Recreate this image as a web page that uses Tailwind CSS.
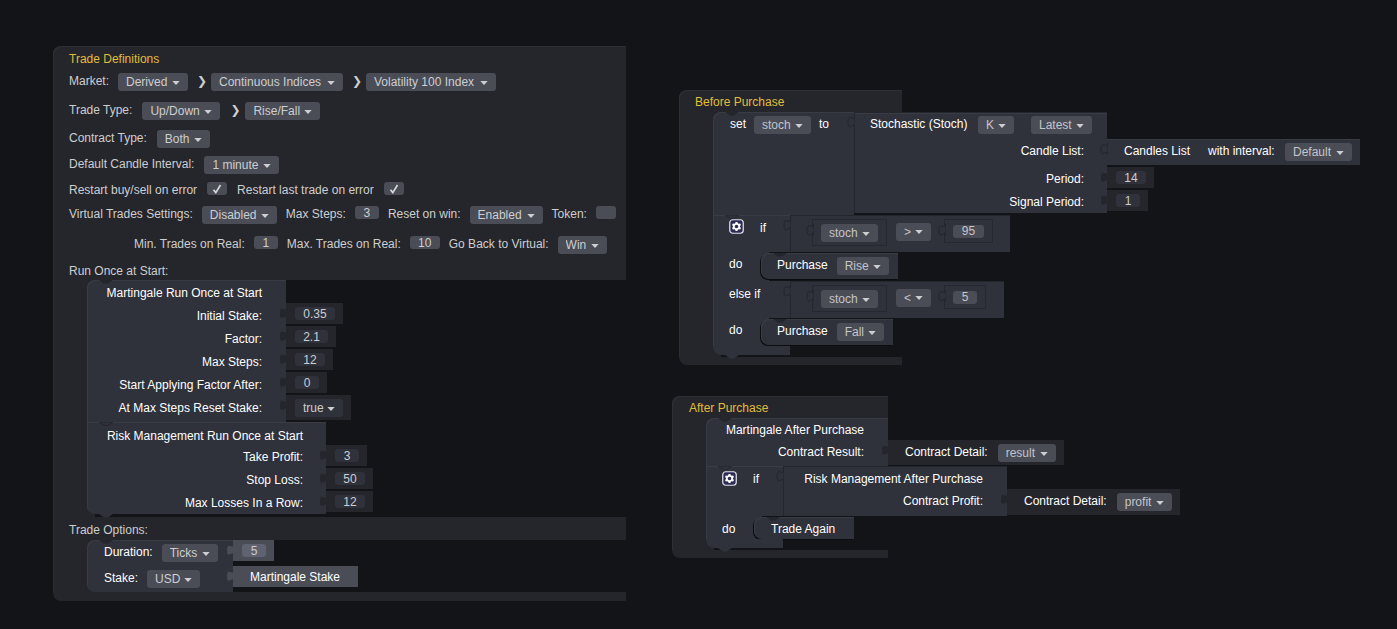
<!doctype html>
<html lang="en">
  <head>
    <meta charset="UTF-8" />
    <meta name="viewport" content="width=device-width, initial-scale=1.0" />
    <title>Bot Builder</title>
    <script src="https://cdn.jsdelivr.net/npm/@tailwindcss/browser@4"></script>
  </head>
  <body class="min-h-screen bg-[#131418] font-['Liberation_Sans',Arial,sans-serif] text-xs text-white">
    <!-- shared block shapes -->
    <svg class="hidden">
      <symbol id="caret" viewBox="0 0 8 4"><path d="M0.3 0h7.4L4 4z" /></symbol>
      <symbol id="tab" viewBox="0 0 8 14"><path d="M8 0C8 7 1 -4 1 6.500S8 4 8 12z" /></symbol>
      <symbol id="notch" viewBox="0 0 14 4"><path d="M0 0h14l-5 3.500H5z" /></symbol>
      <symbol id="check" viewBox="0 0 10 10"><path d="M1.500 5.800 3.800 8.600 8.500 1" fill="none" stroke="#d6d7d9" stroke-width="1.700" /></symbol>
      <symbol id="gear" viewBox="0 0 15 15">
        <rect x="0.750" y="0.750" width="13.500" height="13.500" rx="3" fill="#2c2d55" stroke="#e4e4ea" stroke-width="1.200" />
        <path fill="#fff" fill-rule="evenodd" d="M6.600 3h1.800l.4 1.300.9.500 1.400-.3.900 1.500-1 1v1l1 1-.9 1.500-1.400-.3-.9.500-.4 1.300H6.600l-.4-1.300-.9-.5-1.400.3L3 9l1-1V7L3 6l.9-1.500 1.400.3.900-.5zM7.500 5.700a1.800 1.800 0 1 0 0 3.600 1.800 1.800 0 0 0 0-3.600z" />
      </symbol>
    </svg>

    <main class="relative min-h-screen overflow-hidden">
      <!-- Trade Definitions -->
      <section class="absolute top-[46px] left-[53px] w-[573px] text-[#cdced0]">
        <div class="rounded-tl-lg bg-[#25262b] pl-4 shadow-[inset_1px_1px_0_#2e2f34]">
          <h2 class="h-[27px] pt-[5px] text-[#e0bd3c]">Trade Definitions</h2>
          <div class="flex h-[29px] items-start gap-[9px]">
            <label for="market">Market:</label>
            <span class="relative flex"><select id="market" class="h-[18px] w-[70px] appearance-none rounded-[3px] bg-[#4a4c56] pl-2"><option>Derived</option></select><svg class="pointer-events-none absolute top-2 right-2 h-1 w-2 fill-[#cdced0]"><use href="#caret" /></svg></span>
            <span class="w-[5px] font-['DejaVu_Sans',sans-serif] text-xs leading-4">❯</span>
            <span class="relative flex"><select aria-label="Submarket" class="h-[18px] w-[132px] appearance-none rounded-[3px] bg-[#4a4c56] pl-2"><option>Continuous Indices</option></select><svg class="pointer-events-none absolute top-2 right-2 h-1 w-2 fill-[#cdced0]"><use href="#caret" /></svg></span>
            <span class="w-[5px] font-['DejaVu_Sans',sans-serif] text-xs leading-4">❯</span>
            <span class="relative flex"><select aria-label="Symbol" class="h-[18px] w-[130px] appearance-none rounded-[3px] bg-[#4a4c56] pl-2"><option>Volatility 100 Index</option></select><svg class="pointer-events-none absolute top-2 right-2 h-1 w-2 fill-[#cdced0]"><use href="#caret" /></svg></span>
          </div>
          <div class="flex h-[28px] items-start gap-2.5">
            <label for="trade-type">Trade Type:</label>
            <span class="relative flex"><select id="trade-type" class="h-[18px] w-[78px] appearance-none rounded-[3px] bg-[#4a4c56] pl-2"><option>Up/Down</option></select><svg class="pointer-events-none absolute top-2 right-2 h-1 w-2 fill-[#cdced0]"><use href="#caret" /></svg></span>
            <span class="w-[5px] font-['DejaVu_Sans',sans-serif] text-xs leading-4">❯</span>
            <span class="relative flex"><select aria-label="Trade subtype" class="h-[18px] w-[75px] appearance-none rounded-[3px] bg-[#4a4c56] pl-2"><option>Rise/Fall</option></select><svg class="pointer-events-none absolute top-2 right-2 h-1 w-2 fill-[#cdced0]"><use href="#caret" /></svg></span>
          </div>
          <div class="flex h-[26px] items-start gap-2.5">
            <label for="contract-type">Contract Type:</label>
            <span class="relative flex"><select id="contract-type" class="h-[18px] w-[53px] appearance-none rounded-[3px] bg-[#4a4c56] pl-2"><option>Both</option></select><svg class="pointer-events-none absolute top-2 right-2 h-1 w-2 fill-[#cdced0]"><use href="#caret" /></svg></span>
          </div>
          <div class="flex h-[26px] items-start gap-2.5">
            <label for="candle-interval">Default Candle Interval:</label>
            <span class="relative flex"><select id="candle-interval" class="h-[18px] w-[75px] appearance-none rounded-[3px] bg-[#4a4c56] pl-2"><option>1 minute</option></select><svg class="pointer-events-none absolute top-2 right-2 h-1 w-2 fill-[#cdced0]"><use href="#caret" /></svg></span>
          </div>
          <div class="flex h-[24px] items-start gap-2.5">
            <label for="restart-error">Restart buy/sell on error</label>
            <span class="relative flex"><input id="restart-error" type="checkbox" checked class="h-[13px] w-5 appearance-none rounded-[3px] bg-[#4a4c56]" /><svg class="pointer-events-none absolute top-0.5 left-[5px] size-2.5"><use href="#check" /></svg></span>
            <label for="restart-last">Restart last trade on error</label>
            <span class="relative flex"><input id="restart-last" type="checkbox" checked class="h-[13px] w-5 appearance-none rounded-[3px] bg-[#4a4c56]" /><svg class="pointer-events-none absolute top-0.5 left-[5px] size-2.5"><use href="#check" /></svg></span>
          </div>
          <div class="flex h-[30px] items-start gap-[9px]">
            <label for="virtual-trades">Virtual Trades Settings:</label>
            <span class="relative flex"><select id="virtual-trades" class="h-[18px] w-[75px] appearance-none rounded-[3px] bg-[#4a4c56] pl-2"><option>Disabled</option></select><svg class="pointer-events-none absolute top-2 right-2 h-1 w-2 fill-[#cdced0]"><use href="#caret" /></svg></span>
            <label for="virtual-steps">Max Steps:</label>
            <input id="virtual-steps" type="text" value="3" class="h-[13px] w-6 rounded-[3px] bg-[#4a4c56] text-center" />
            <label for="reset-win">Reset on win:</label>
            <span class="relative flex"><select id="reset-win" class="h-[18px] w-[73px] appearance-none rounded-[3px] bg-[#4a4c56] pl-2"><option>Enabled</option></select><svg class="pointer-events-none absolute top-2 right-2 h-1 w-2 fill-[#cdced0]"><use href="#caret" /></svg></span>
            <label for="token">Token:</label>
            <input id="token" type="text" class="h-[13px] w-5 rounded-[3px] bg-[#4a4c56] text-center" />
          </div>
          <div class="flex h-[28px] items-start gap-[9px] pl-[65px]">
            <label for="min-real">Min. Trades on Real:</label>
            <input id="min-real" type="text" value="1" class="h-[13px] w-6 rounded-[3px] bg-[#4a4c56] text-center" />
            <label for="max-real">Max. Trades on Real:</label>
            <input id="max-real" type="text" value="10" class="h-[13px] w-[30px] rounded-[3px] bg-[#4a4c56] text-center" />
            <label for="back-virtual">Go Back to Virtual:</label>
            <span class="relative flex"><select id="back-virtual" class="h-[18px] w-[49px] appearance-none rounded-[3px] bg-[#4a4c56] pl-2"><option>Win</option></select><svg class="pointer-events-none absolute top-2 right-2 h-1 w-2 fill-[#cdced0]"><use href="#caret" /></svg></span>
          </div>
          <p class="h-4 leading-[14px]">Run Once at Start:</p>
        </div>

        <div class="flex">
          <div class="-mr-2 w-[42px] shrink-0 bg-[#25262b] shadow-[inset_1px_0_0_#2e2f34]"></div>
          <div class="pb-[3px]">
            <!-- Martingale Run Once at Start -->
            <div class="flex items-start">
              <div class="relative h-[142px] w-[199px] rounded-tl-lg bg-[#2f313b] pt-0.5 pr-6 text-right leading-[23px] text-white shadow-[inset_1px_1px_0_#3a3c45]">
                <svg class="absolute top-0 left-3 h-1 w-3.5 fill-[#25262b]"><use href="#notch" /></svg>
                <h3>Martingale Run Once at Start</h3>
                <label class="block" for="initial-stake">Initial Stake:</label>
                <label class="block" for="factor">Factor:</label>
                <label class="block" for="max-steps">Max Steps:</label>
                <label class="block" for="factor-after">Start Applying Factor After:</label>
                <label class="block" for="reset-stake">At Max Steps Reset Stake:</label>
              </div>
              <div class="flex flex-col items-start gap-0.5 pt-[23px]">
                <div class="relative flex h-[21px] items-center bg-[#25262b] pr-2 pl-[9px]">
                  <svg class="absolute top-1 -left-[7px] h-3.5 w-2 fill-[#25262b]"><use href="#tab" /></svg>
                  <input id="initial-stake" type="text" value="0.35" class="h-[13px] w-10 rounded-[3px] bg-[#2f313b] text-center" />
                </div>
                <div class="relative flex h-[21px] items-center bg-[#25262b] pr-2 pl-[9px]">
                  <svg class="absolute top-1 -left-[7px] h-3.5 w-2 fill-[#25262b]"><use href="#tab" /></svg>
                  <input id="factor" type="text" value="2.1" class="h-[13px] w-[33px] rounded-[3px] bg-[#2f313b] text-center" />
                </div>
                <div class="relative flex h-[21px] items-center bg-[#25262b] pr-2 pl-[9px]">
                  <svg class="absolute top-1 -left-[7px] h-3.5 w-2 fill-[#25262b]"><use href="#tab" /></svg>
                  <input id="max-steps" type="text" value="12" class="h-[13px] w-[30px] rounded-[3px] bg-[#2f313b] text-center" />
                </div>
                <div class="relative flex h-[21px] items-center bg-[#25262b] pr-2 pl-[9px]">
                  <svg class="absolute top-1 -left-[7px] h-3.5 w-2 fill-[#25262b]"><use href="#tab" /></svg>
                  <input id="factor-after" type="text" value="0" class="h-[13px] w-6 rounded-[3px] bg-[#2f313b] text-center" />
                </div>
                <div class="relative flex h-[25px] items-center bg-[#25262b] pr-2 pl-[9px]">
                  <svg class="absolute top-1 -left-[7px] h-3.5 w-2 fill-[#25262b]"><use href="#tab" /></svg>
                  <span class="relative flex"><select id="reset-stake" class="h-[18px] w-12 appearance-none rounded-[3px] bg-[#2f313b] pl-2"><option>true</option></select><svg class="pointer-events-none absolute top-2 right-2 h-1 w-2 fill-[#cdced0]"><use href="#caret" /></svg></span>
                </div>
              </div>
            </div>

            <!-- Risk Management Run Once at Start -->
            <div class="flex items-start">
              <div class="relative h-[92px] w-[239px] rounded-bl-lg bg-[#2f313b] pt-px pr-[23px] text-right leading-[23px] text-white shadow-[inset_1px_1px_0_#3a3c45]">
                <svg class="absolute top-0 left-3 h-1 w-3.5 fill-[#2f313b] stroke-[#25262b]"><use href="#notch" /></svg>
                <svg class="absolute -bottom-1 left-3 h-1 w-3.5 fill-[#2f313b]"><use href="#notch" /></svg>
                <h3 class="h-[23px] leading-[26px]">Risk Management Run Once at Start</h3>
                <label class="block" for="take-profit">Take Profit:</label>
                <label class="block" for="stop-loss">Stop Loss:</label>
                <label class="block" for="max-losses">Max Losses In a Row:</label>
              </div>
              <div class="flex flex-col items-start gap-0.5 pt-[23px]">
                <div class="relative flex h-[21px] items-center bg-[#25262b] pr-2 pl-[9px]">
                  <svg class="absolute top-1 -left-[7px] h-3.5 w-2 fill-[#25262b]"><use href="#tab" /></svg>
                  <input id="take-profit" type="text" value="3" class="h-[13px] w-6 rounded-[3px] bg-[#2f313b] text-center" />
                </div>
                <div class="relative flex h-[21px] items-center bg-[#25262b] pr-2 pl-[9px]">
                  <svg class="absolute top-1 -left-[7px] h-3.5 w-2 fill-[#25262b]"><use href="#tab" /></svg>
                  <input id="stop-loss" type="text" value="50" class="h-[13px] w-[30px] rounded-[3px] bg-[#2f313b] text-center" />
                </div>
                <div class="relative flex h-[21px] items-center bg-[#25262b] pr-2 pl-[9px]">
                  <svg class="absolute top-1 -left-[7px] h-3.5 w-2 fill-[#25262b]"><use href="#tab" /></svg>
                  <input id="max-losses" type="text" value="12" class="h-[13px] w-[30px] rounded-[3px] bg-[#2f313b] text-center" />
                </div>
              </div>
            </div>
          </div>
        </div>

        <p class="h-[23px] bg-[#25262b] pl-4 leading-[26px] shadow-[inset_1px_0_0_#2e2f34]">Trade Options:</p>

        <div class="flex">
          <div class="-mr-2 w-[42px] shrink-0 bg-[#25262b] shadow-[inset_1px_0_0_#2e2f34]"></div>
          <div class="relative h-[52px] w-[146px] rounded-l-lg bg-[#2f313b] pt-1 pl-[17px] shadow-[inset_1px_1px_0_#3a3c45]">
            <svg class="absolute top-0 left-3 h-1 w-3.5 fill-[#25262b]"><use href="#notch" /></svg>
            <div class="flex h-[26px] items-start gap-[9px]">
              <label for="duration-unit" class="text-white">Duration:</label>
              <span class="relative flex"><select id="duration-unit" class="h-[18px] w-14 appearance-none rounded-[3px] bg-[#4a4c56] pl-2"><option>Ticks</option></select><svg class="pointer-events-none absolute top-2 right-2 h-1 w-2 fill-[#cdced0]"><use href="#caret" /></svg></span>
            </div>
            <div class="flex items-start gap-[9px]">
              <label for="currency" class="text-white">Stake:</label>
              <span class="relative flex"><select id="currency" class="h-[18px] w-[53px] appearance-none rounded-[3px] bg-[#4a4c56] pl-2"><option>USD</option></select><svg class="pointer-events-none absolute top-2 right-2 h-1 w-2 fill-[#cdced0]"><use href="#caret" /></svg></span>
            </div>
          </div>
          <div class="flex flex-col items-start gap-[5px]">
            <div class="relative flex h-[21px] items-center bg-[#4a4c56] pr-2 pl-[9px]">
              <svg class="absolute top-1 -left-[7px] h-3.5 w-2 fill-[#4a4c56]"><use href="#tab" /></svg>
              <input aria-label="Duration" type="text" value="5" class="h-[13px] w-6 rounded-[3px] bg-[#5f6270] text-center" />
            </div>
            <div class="relative h-[21px] w-[125px] bg-[#4a4c56] pl-[17px] leading-[22px] text-white">
              <svg class="absolute top-1 -left-[7px] h-3.5 w-2 fill-[#4a4c56]"><use href="#tab" /></svg>
              Martingale Stake
            </div>
          </div>
        </div>
        <div class="h-[9px] rounded-bl-lg bg-[#25262b]"></div>
      </section>

      <!-- Before Purchase -->
      <section class="absolute top-[90px] left-[679px]">
        <h2 class="h-[22px] w-[223px] rounded-tl-lg bg-[#25262b] pt-1 pl-4 text-[#e0bd3c] shadow-[inset_1px_1px_0_#2e2f34]">Before Purchase</h2>
        <div class="flex">
          <div class="-mr-2 w-[42px] shrink-0 bg-[#25262b] shadow-[inset_1px_0_0_#2e2f34]"></div>
          <div class="pb-0.5">
            <!-- set stoch to -->
            <div class="flex items-start">
              <div class="relative flex h-[103px] w-[141px] items-start gap-2 rounded-tl-lg bg-[#2f313b] pt-1 pl-[17px] shadow-[inset_1px_1px_0_#3a3c45]">
                <svg class="absolute top-0 left-3 h-1 w-3.5 fill-[#25262b]"><use href="#notch" /></svg>
                <label for="set-var">set</label>
                <span class="relative flex text-[#c4c5c9]"><select id="set-var" class="h-[18px] w-[57px] appearance-none rounded-[3px] bg-[#4a4c56] pl-2"><option>stoch</option></select><svg class="pointer-events-none absolute top-2 right-2 h-1 w-2 fill-[#cdced0]"><use href="#caret" /></svg></span>
                <span>to</span>
              </div>
              <div class="relative h-[101px] w-[253px] bg-[#2f313b] pt-1 pr-[23px] pl-4 shadow-[inset_1px_1px_0_#24262e,inset_0_2px_0_#3a3c45]">
                <svg class="absolute top-1 -left-[7px] h-3.5 w-2 overflow-visible fill-[#2f313b] stroke-[#24262e]"><use href="#tab" /></svg>
                <div class="flex h-[23px] items-start">
                  <span class="w-[108px] shrink-0">Stochastic (Stoch)</span>
                  <span class="relative mr-[17px] flex shrink-0 text-[#c4c5c9]"><select aria-label="Stochastic line" class="h-[18px] w-9 appearance-none rounded-[3px] bg-[#4a4c56] pl-2"><option>K</option></select><svg class="pointer-events-none absolute top-2 right-2 h-1 w-2 fill-[#cdced0]"><use href="#caret" /></svg></span>
                  <span class="relative flex shrink-0 text-[#c4c5c9]"><select aria-label="Value position" class="h-[18px] w-[61px] appearance-none rounded-[3px] bg-[#4a4c56] pl-2"><option>Latest</option></select><svg class="pointer-events-none absolute top-2 right-2 h-1 w-2 fill-[#cdced0]"><use href="#caret" /></svg></span>
                </div>
                <span class="block h-[27px] text-right leading-6">Candle List:</span>
                <label for="period" class="block h-[23px] text-right leading-[26px]">Period:</label>
                <label for="signal-period" class="block text-right leading-[26px]">Signal Period:</label>
              </div>
              <div class="flex flex-col items-start gap-0.5 pt-[27px]">
                <div class="relative flex h-[26px] items-start bg-[#2f313b] pt-1 pr-2 pl-[17px] shadow-[inset_0_1px_0_#3a3c45]">
                  <svg class="absolute top-1 -left-[7px] h-3.5 w-2 overflow-visible fill-[#2f313b] stroke-[#24262e]"><use href="#tab" /></svg>
                  <span class="w-[84px]">Candles List</span>
                  <label for="interval" class="w-[77px]">with interval:</label>
                  <span class="relative flex text-[#c4c5c9]"><select id="interval" class="h-[18px] w-[67px] appearance-none rounded-[3px] bg-[#4a4c56] pl-2"><option>Default</option></select><svg class="pointer-events-none absolute top-2 right-2 h-1 w-2 fill-[#cdced0]"><use href="#caret" /></svg></span>
                </div>
                <div class="relative flex h-[21px] items-center bg-[#25262b] pr-2 pl-[9px] text-[#cdced0]">
                  <svg class="absolute top-1 -left-[7px] h-3.5 w-2 fill-[#25262b]"><use href="#tab" /></svg>
                  <input id="period" type="text" value="14" class="h-[13px] w-[30px] rounded-[3px] bg-[#2f313b] text-center" />
                </div>
                <div class="relative flex h-[21px] items-center bg-[#25262b] pr-2 pl-[9px] text-[#cdced0]">
                  <svg class="absolute top-1 -left-[7px] h-3.5 w-2 fill-[#25262b]"><use href="#tab" /></svg>
                  <input id="signal-period" type="text" value="1" class="h-[13px] w-6 rounded-[3px] bg-[#2f313b] text-center" />
                </div>
              </div>
            </div>

            <!-- if / else if -->
            <div class="relative">
              <svg class="absolute top-0 left-3 z-10 h-1 w-3.5 overflow-visible fill-[#2f313b] stroke-[#272931]"><use href="#notch" /></svg>
              <div class="flex">
                <div class="flex h-[37px] w-[77px] items-start gap-4 bg-[#2f313b] pt-1 pl-4 shadow-[inset_1px_1px_0_#3a3c45]">
                  <button type="button" aria-label="Edit conditions" class="size-[15px]"><svg class="size-[15px]"><use href="#gear" /></svg></button>
                  <span class="leading-[18px]">if</span>
                </div>
                <div class="relative flex h-[37px] items-start bg-[#2f313b] pt-1 pr-[17px] pl-[22px] text-[#c4c5c9] shadow-[inset_1px_1px_0_#24262e]">
                  <svg class="absolute top-1 -left-[7px] h-3.5 w-2 overflow-visible fill-[#2f313b] stroke-[#24262e]"><use href="#tab" /></svg>
                  <div class="relative flex h-[27px] w-[75px] items-center border border-[#26282f] pl-2">
                    <svg class="absolute top-1 -left-[7px] h-3.5 w-2 overflow-visible fill-[#2f313b] stroke-[#24262e]"><use href="#tab" /></svg>
                    <span class="relative flex"><select aria-label="Left operand" class="h-[18px] w-[57px] appearance-none rounded-[3px] bg-[#4a4c56] pl-2"><option>stoch</option></select><svg class="pointer-events-none absolute top-2 right-2 h-1 w-2 fill-[#cdced0]"><use href="#caret" /></svg></span>
                  </div>
                  <span class="relative mt-1 mr-[13px] ml-[9px] flex"><select aria-label="Comparison" class="h-[18px] w-[35px] appearance-none rounded-[3px] bg-[#4a4c56] pl-2"><option>&gt;</option></select><svg class="pointer-events-none absolute top-[7px] right-2 h-1 w-2 fill-[#cdced0]"><use href="#caret" /></svg></span>
                  <div class="relative flex h-6 items-center border border-[#26282f] px-2">
                    <svg class="absolute top-1 -left-[7px] h-3.5 w-2 overflow-visible fill-[#2f313b] stroke-[#24262e]"><use href="#tab" /></svg>
                    <input aria-label="Right operand" type="text" value="95" class="h-[13px] w-[31px] rounded-[3px] bg-[#4a4c56] text-center" />
                  </div>
                </div>
              </div>
              <div class="flex">
                <span class="-mr-2 h-[29px] w-14 bg-[#2f313b] pl-4 leading-6 shadow-[inset_1px_0_0_#3a3c45]">do</span>
                <div class="relative mt-px flex h-[26px] items-start gap-[9px] rounded-l-lg bg-[#2f313b] pt-1 pr-[9px] pl-4 shadow-[inset_1px_1px_0_#3a3c45,-1px_1px_0_#0c0d10]">
                  <svg class="absolute top-0 left-3 h-1 w-3.5 fill-[#24262e]"><use href="#notch" /></svg>
                  <label for="purchase-rise">Purchase</label>
                  <span class="relative flex text-[#c4c5c9]"><select id="purchase-rise" class="h-[18px] w-[52px] appearance-none rounded-[3px] bg-[#4a4c56] pl-2"><option>Rise</option></select><svg class="pointer-events-none absolute top-2 right-2 h-1 w-2 fill-[#cdced0]"><use href="#caret" /></svg></span>
                </div>
              </div>
              <div class="flex">
                <span class="h-[37px] w-[77px] bg-[#2f313b] pl-4 leading-[26px] shadow-[inset_1px_0_0_#3a3c45]">else if</span>
                <div class="relative flex h-[37px] items-start bg-[#2f313b] pt-1 pr-[18px] pl-[22px] text-[#c4c5c9] shadow-[inset_1px_1px_0_#24262e]">
                  <svg class="absolute top-1 -left-[7px] h-3.5 w-2 overflow-visible fill-[#2f313b] stroke-[#24262e]"><use href="#tab" /></svg>
                  <div class="relative flex h-[27px] w-[75px] items-center border border-[#26282f] pl-2">
                    <svg class="absolute top-1 -left-[7px] h-3.5 w-2 overflow-visible fill-[#2f313b] stroke-[#24262e]"><use href="#tab" /></svg>
                    <span class="relative flex"><select aria-label="Left operand" class="h-[18px] w-[57px] appearance-none rounded-[3px] bg-[#4a4c56] pl-2"><option>stoch</option></select><svg class="pointer-events-none absolute top-2 right-2 h-1 w-2 fill-[#cdced0]"><use href="#caret" /></svg></span>
                  </div>
                  <span class="relative mt-1 mr-[13px] ml-[9px] flex"><select aria-label="Comparison" class="h-[18px] w-[35px] appearance-none rounded-[3px] bg-[#4a4c56] pl-2"><option>&lt;</option></select><svg class="pointer-events-none absolute top-[7px] right-2 h-1 w-2 fill-[#cdced0]"><use href="#caret" /></svg></span>
                  <div class="relative flex h-6 items-center border border-[#26282f] px-2">
                    <svg class="absolute top-1 -left-[7px] h-3.5 w-2 overflow-visible fill-[#2f313b] stroke-[#24262e]"><use href="#tab" /></svg>
                    <input aria-label="Right operand" type="text" value="5" class="h-[13px] w-6 rounded-[3px] bg-[#4a4c56] text-center" />
                  </div>
                </div>
              </div>
              <div class="flex">
                <span class="-mr-2 h-7 w-14 bg-[#2f313b] pl-4 leading-6 shadow-[inset_1px_0_0_#3a3c45]">do</span>
                <div class="relative mt-px flex h-[26px] items-start gap-[9px] rounded-l-lg bg-[#2f313b] pt-1 pr-[9px] pl-4 shadow-[inset_1px_1px_0_#3a3c45,-1px_1px_0_#0c0d10]">
                  <svg class="absolute top-0 left-3 h-1 w-3.5 fill-[#24262e]"><use href="#notch" /></svg>
                  <label for="purchase-fall">Purchase</label>
                  <span class="relative flex text-[#c4c5c9]"><select id="purchase-fall" class="h-[18px] w-[47px] appearance-none rounded-[3px] bg-[#4a4c56] pl-2"><option>Fall</option></select><svg class="pointer-events-none absolute top-2 right-2 h-1 w-2 fill-[#cdced0]"><use href="#caret" /></svg></span>
                </div>
              </div>
              <div class="relative h-[9px] w-[77px] rounded-bl-lg bg-[#2f313b]">
                <svg class="absolute -bottom-1 left-3 h-1 w-3.5 fill-[#2f313b]"><use href="#notch" /></svg>
              </div>
            </div>
          </div>
        </div>
        <div class="h-2 w-[223px] rounded-bl-lg bg-[#25262b]"></div>
      </section>

      <!-- After Purchase -->
      <section class="absolute top-[396px] left-[672px]">
        <h2 class="h-[22px] w-[216px] rounded-tl-lg bg-[#25262b] pt-1 pl-[17px] text-[#e0bd3c] shadow-[inset_1px_1px_0_#2e2f34]">After Purchase</h2>
        <div class="flex">
          <div class="-mr-2 w-[42px] shrink-0 bg-[#25262b] shadow-[inset_1px_0_0_#2e2f34]"></div>
          <div class="pb-0.5">
            <div class="flex items-start">
              <div class="relative h-12 w-[182px] rounded-tl-lg bg-[#2f313b] pr-6 text-right shadow-[inset_1px_1px_0_#3a3c45]">
                <svg class="absolute top-0 left-3 h-1 w-3.5 fill-[#25262b]"><use href="#notch" /></svg>
                <h3 class="h-[22px] leading-6">Martingale After Purchase</h3>
                <span class="block leading-6">Contract Result:</span>
              </div>
              <div class="pt-[22px]">
                <div class="relative flex h-[25px] items-start gap-2.5 bg-[#25262b] pt-1 pr-2 pl-[17px]">
                  <svg class="absolute top-1 -left-[7px] h-3.5 w-2 fill-[#25262b]"><use href="#tab" /></svg>
                  <label for="result-detail">Contract Detail:</label>
                  <span class="relative flex text-[#c4c5c9]"><select id="result-detail" class="h-[18px] w-[58px] appearance-none rounded-[3px] bg-[#4a4c56] pl-2"><option>result</option></select><svg class="pointer-events-none absolute top-2 right-2 h-1 w-2 fill-[#cdced0]"><use href="#caret" /></svg></span>
                </div>
              </div>
            </div>

            <div class="relative">
              <svg class="absolute top-0 left-3 z-10 h-1 w-3.5 overflow-visible fill-[#2f313b] stroke-[#272931]"><use href="#notch" /></svg>
              <div class="flex items-start">
                <div class="flex h-[50px] w-[77px] items-start gap-4 bg-[#2f313b] pt-[5px] pl-4 shadow-[inset_1px_1px_0_#3a3c45]">
                  <button type="button" aria-label="Edit conditions" class="size-[15px]"><svg class="size-[15px]"><use href="#gear" /></svg></button>
                  <span>if</span>
                </div>
                <div class="relative h-[50px] w-[224px] bg-[#2f313b] pr-6 text-right shadow-[inset_1px_1px_0_#24262e]">
                  <svg class="absolute top-1 -left-[7px] h-3.5 w-2 overflow-visible fill-[#2f313b] stroke-[#24262e]"><use href="#tab" /></svg>
                  <h3 class="h-[22px] leading-[26px]">Risk Management After Purchase</h3>
                  <span class="block leading-[26px]">Contract Profit:</span>
                </div>
                <div class="pt-[23px]">
                  <div class="relative flex h-[26px] items-start gap-2.5 bg-[#25262b] pt-1 pr-2 pl-[17px]">
                    <svg class="absolute top-1 -left-[7px] h-3.5 w-2 fill-[#25262b]"><use href="#tab" /></svg>
                    <label for="profit-detail">Contract Detail:</label>
                    <span class="relative flex text-[#c4c5c9]"><select id="profit-detail" class="h-[18px] w-[55px] appearance-none rounded-[3px] bg-[#4a4c56] pl-2"><option>profit</option></select><svg class="pointer-events-none absolute top-2 right-2 h-1 w-2 fill-[#cdced0]"><use href="#caret" /></svg></span>
                  </div>
                </div>
              </div>
              <div class="flex">
                <span class="-mr-2 h-[23px] w-14 bg-[#2f313b] pl-4 leading-[26px] shadow-[inset_1px_0_0_#3a3c45]">do</span>
                <div class="relative mt-px h-[22px] w-[100px] rounded-l-lg bg-[#2f313b] pl-[17px] leading-6 shadow-[inset_1px_1px_0_#3a3c45,-1px_1px_0_#0c0d10]">
                  <svg class="absolute top-0 left-3 h-1 w-3.5 fill-[#24262e]"><use href="#notch" /></svg>
                  Trade Again
                </div>
              </div>
              <div class="relative h-[9px] w-[77px] rounded-bl-lg bg-[#2f313b]">
                <svg class="absolute -bottom-1 left-3 h-1 w-3.5 fill-[#2f313b]"><use href="#notch" /></svg>
              </div>
            </div>
          </div>
        </div>
        <div class="h-2 w-[216px] rounded-bl-lg bg-[#25262b]"></div>
      </section>
    </main>
  </body>
</html>
